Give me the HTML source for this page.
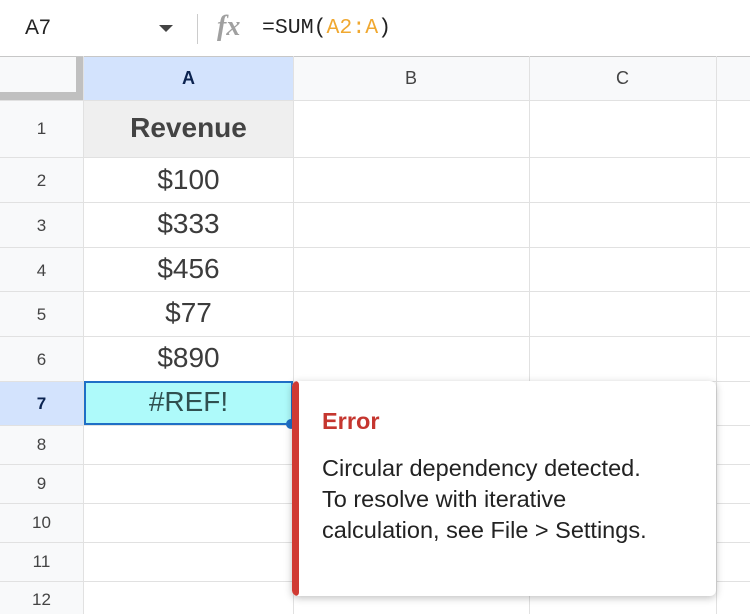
<!DOCTYPE html><html><head><style>
body{margin:0;width:750px;height:614px;overflow:hidden;background:#fff;font-family:"Liberation Sans",Roboto,sans-serif;position:relative}
.a{position:absolute}
.h{position:absolute;left:0;width:750px;height:1px;background:#e1e1e1}
.v{position:absolute;top:56px;width:1px;height:558px;background:#e1e1e1}
.rn{position:absolute;left:0;width:83px;text-align:center;font-size:17px;color:#444}
.cv{position:absolute;left:84px;width:209px;text-align:center;font-size:28px;color:#3c3c3c}
</style></head><body>
<div class="a" style="left:0;top:0;width:750px;height:56px;background:#fff;border-bottom:1px solid #c7c7c7"></div>
<div class="a" style="left:25px;top:16px;font-size:21px;color:#222">A7</div>
<div class="a" style="left:159px;top:25px;width:0;height:0;border-left:7px solid transparent;border-right:7px solid transparent;border-top:7px solid #444"></div>
<div class="a" style="left:197px;top:14px;width:1px;height:30px;background:#ccc"></div>
<div class="a" style="left:217px;top:11px;font-size:28px;font-style:italic;font-weight:bold;font-family:'Liberation Serif',serif;color:#a0a0a0">fx</div>
<div class="a" style="left:262px;top:16px;font-size:21.5px;font-family:'Liberation Mono',monospace;color:#222">=SUM(<span style="color:#f0a830">A2:A</span>)</div>
<!-- headers -->
<div class="a" style="left:0;top:57px;width:76px;height:43px;background:#f8f9fa"></div>
<div class="a" style="left:76px;top:57px;width:8px;height:43px;background:#c0c0c0"></div>
<div class="a" style="left:0;top:92px;width:84px;height:8px;background:#c0c0c0"></div>
<div class="a" style="left:84px;top:57px;width:209px;height:43px;background:#d3e3fd"></div>
<div class="a" style="left:293px;top:57px;width:457px;height:43px;background:#f8f9fa"></div>
<div class="a" style="left:84px;top:68px;width:209px;text-align:center;font-size:18px;font-weight:bold;color:#0b2350">A</div>
<div class="a" style="left:293px;top:68px;width:236px;text-align:center;font-size:18px;color:#444">B</div>
<div class="a" style="left:529px;top:68px;width:187px;text-align:center;font-size:18px;color:#444">C</div>
<div class="a" style="left:0;top:100px;width:83px;height:514px;background:#f8f9fa"></div>
<div class="a" style="left:0;top:381px;width:83px;height:44px;background:#d3e3fd"></div>
<div class="a" style="left:84px;top:100px;width:209px;height:57px;background:#efefef"></div>
<div class="h" style="top:100px"></div><div class="h" style="top:157px"></div><div class="h" style="top:202px"></div><div class="h" style="top:247px"></div><div class="h" style="top:291px"></div><div class="h" style="top:336px"></div><div class="h" style="top:381px"></div><div class="h" style="top:425px"></div><div class="h" style="top:464px"></div><div class="h" style="top:503px"></div><div class="h" style="top:542px"></div><div class="h" style="top:581px"></div>
<div class="v" style="left:83px"></div><div class="v" style="left:293px"></div><div class="v" style="left:529px"></div><div class="v" style="left:716px"></div>
<div class="rn" style="top:119px">1</div><div class="rn" style="top:171px">2</div><div class="rn" style="top:216px">3</div><div class="rn" style="top:261px">4</div><div class="rn" style="top:305px">5</div><div class="rn" style="top:350px">6</div><div class="rn" style="top:394px;font-weight:bold;color:#0b2350">7</div><div class="rn" style="top:435px">8</div><div class="rn" style="top:474px">9</div><div class="rn" style="top:513px">10</div><div class="rn" style="top:552px">11</div><div class="rn" style="top:590px">12</div>
<div class="cv" style="top:112px;font-weight:bold;color:#434343">Revenue</div>
<div class="cv" style="top:164px">$100</div><div class="cv" style="top:208px">$333</div><div class="cv" style="top:253px">$456</div><div class="cv" style="top:297px">$77</div><div class="cv" style="top:342px">$890</div>
<div class="a" style="left:84px;top:381px;width:205px;height:40px;background:#aefafa;border:2px solid #1f6fc6"></div>
<div class="cv" style="top:386px;color:#305050">#REF!</div>
<div class="a" style="left:286px;top:419px;width:10px;height:10px;border-radius:5px;background:#1f6fc6"></div>
<div class="a" style="left:292px;top:381px;width:424px;height:215px;background:#fff;border-radius:6px;box-shadow:0 2px 8px rgba(0,0,0,.25);overflow:hidden">
<div class="a" style="left:0;top:0;width:7px;height:215px;background:#d03a33;border-radius:4px"></div>
<div class="a" style="left:30px;top:27px;font-size:23.5px;font-weight:bold;color:#c5362f">Error</div>
<div class="a" style="left:30px;top:72px;font-size:23.5px;line-height:31px;color:#222">Circular dependency detected.<br>To resolve with iterative<br>calculation, see File &gt; Settings.</div>
</div>
</body></html>
